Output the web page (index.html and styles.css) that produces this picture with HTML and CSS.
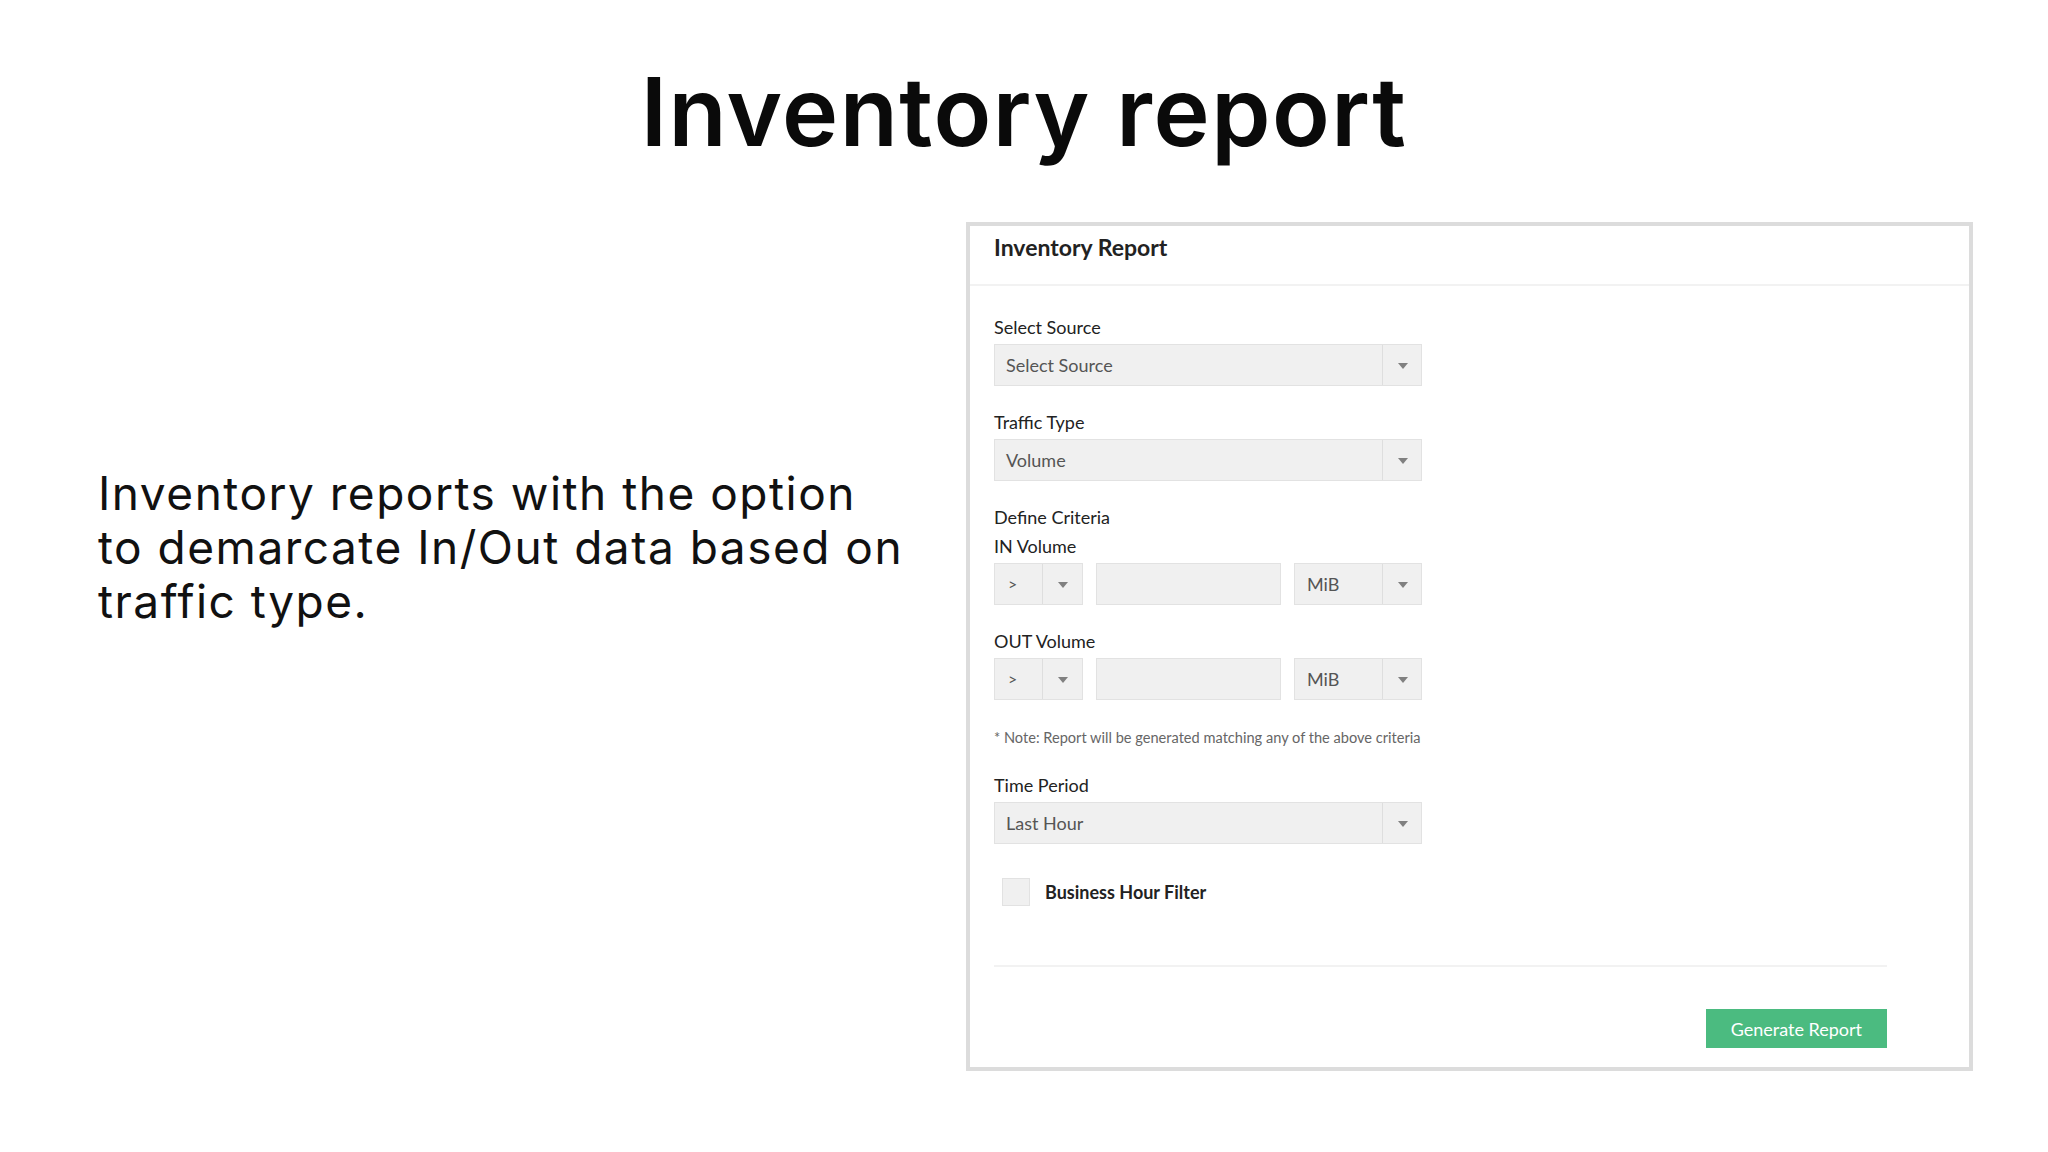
FILE: index.html
```html
<!DOCTYPE html>
<html>
<head>
    <title>Inventory report</title>
    <link rel="stylesheet" href="styles.css">
</head>
<body>
    <h1 class="title">Inventory report</h1>

    <div class="content">
        <p class="intro">Inventory reports with the option<br>to demarcate In/Out data based on<br>traffic type.</p>

        <div class="panel">
            <div class="panel-head">Inventory Report</div>

            <div class="panel-body">
                <div class="field first">
                    <label>Select Source</label>
                    <div class="select wide"><span class="value">Select Source</span><span class="arrow"></span></div>
                </div>

                <div class="field">
                    <label>Traffic Type</label>
                    <div class="select wide"><span class="value">Volume</span><span class="arrow"></span></div>
                </div>

                <div class="field">
                    <label>Define Criteria</label>
                    <label class="sub">IN Volume</label>
                    <div class="criteria">
                        <div class="select op"><span class="value">&gt;</span><span class="arrow"></span></div>
                        <div class="text-box"></div>
                        <div class="select unit"><span class="value">MiB</span><span class="arrow"></span></div>
                    </div>
                </div>

                <div class="field">
                    <label>OUT Volume</label>
                    <div class="criteria">
                        <div class="select op"><span class="value">&gt;</span><span class="arrow"></span></div>
                        <div class="text-box"></div>
                        <div class="select unit"><span class="value">MiB</span><span class="arrow"></span></div>
                    </div>
                </div>

                <p class="note">* Note: Report will be generated matching any of the above criteria</p>

                <div class="field period">
                    <label>Time Period</label>
                    <div class="select wide"><span class="value">Last Hour</span><span class="arrow"></span></div>
                </div>

                <div class="check-row">
                    <span class="checkbox"></span>
                    <span class="check-label">Business Hour Filter</span>
                </div>

                <div class="actions">
                    <button class="btn">Generate Report</button>
                </div>
            </div>
        </div>
    </div>
</body>
</html>
```

FILE: styles.css
```css
body {
    background-color: #fff;
    font-family: "Inter", "Liberation Sans", sans-serif;
    margin: 0;
    padding: 0;
    height: 1152px;
    overflow: hidden;
}

.title {
    margin: 0;
    padding-top: 62px;
    height: 160px;
    box-sizing: border-box;
    text-align: center;
    font-size: 95px;
    line-height: 100px;
    font-weight: 600;
    color: #0a0a0a;
    letter-spacing: 1.5px;
}

.content {
    display: grid;
    grid-template-columns: 868px 1007px;
    padding: 62px 75px 0 98px;
}

.intro {
    margin: 0;
    margin-top: 244px;
    font-size: 46px;
    line-height: 54px;
    letter-spacing: 1.5px;
    white-space: nowrap;
    color: #111;
}

/* report panel */
.panel {
    border: 4px solid #dcdcdc;
    height: 849px;
    box-sizing: border-box;
    font-family: "Lato", sans-serif;
    color: #222;
}

.panel-head {
    font-size: 23px;
    font-weight: bold;
    line-height: 28px;
    padding: 7px 24px 23px;
    border-bottom: 2px solid #f2f2f2;
}

.panel-body {
    padding: 0 82px 0 24px;
}

label {
    display: block;
    font-size: 18px;
    line-height: 22px;
    margin-bottom: 6px;
}

label.sub {
    margin-top: 7px;
}

.field {
    margin-top: 25px;
}

.field.first {
    margin-top: 30px;
}

.select {
    display: flex;
    height: 42px;
    box-sizing: border-box;
    background-color: #f0f0f0;
    border: 1px solid #e2e2e2;
    font-size: 18px;
    color: #555;
}

.select .value {
    flex: 1;
    line-height: 40px;
    padding-left: 11px;
}

.select .arrow {
    width: 38px;
    border-left: 1px solid #dedede;
    position: relative;
}

.select .arrow::after {
    content: "";
    position: absolute;
    left: 15px;
    top: 18px;
    border-left: 5px solid transparent;
    border-right: 5px solid transparent;
    border-top: 6px solid #808080;
}

.wide {
    width: 428px;
}

.criteria {
    display: flex;
    gap: 13px;
    width: 428px;
}

.select.op {
    width: 89px;
}

.select.op .value {
    padding-left: 13px;
    font-size: 16px;
}

.select.op .arrow {
    width: 39px;
}

.select.unit {
    width: 128px;
}

.select.unit .value {
    padding-left: 12px;
}

.text-box {
    width: 185px;
    height: 42px;
    box-sizing: border-box;
    background-color: #f0f0f0;
    border: 1px solid #e2e2e2;
}

.note {
    margin: 29px 0 0;
    font-size: 14.6px;
    line-height: 18px;
    color: #666;
}

.field.period {
    margin-top: 27px;
}

.check-row {
    display: flex;
    align-items: center;
    margin-top: 34px;
    padding-left: 8px;
}

.checkbox {
    width: 28px;
    height: 28px;
    box-sizing: border-box;
    background-color: #f0f0f0;
    border: 1px solid #e2e2e2;
    margin-right: 15px;
}

.check-label {
    font-size: 18px;
    font-weight: bold;
    color: #222;
}

.actions {
    margin-top: 59px;
    border-top: 2px solid #f2f2f2;
    padding-top: 42px;
    display: flex;
    justify-content: flex-end;
}

.btn {
    background-color: #4bbb80;
    color: #fff;
    border: none;
    font-family: "Lato", sans-serif;
    font-size: 18px;
    height: 39px;
    padding: 0 25px;
    cursor: pointer;
}
```
